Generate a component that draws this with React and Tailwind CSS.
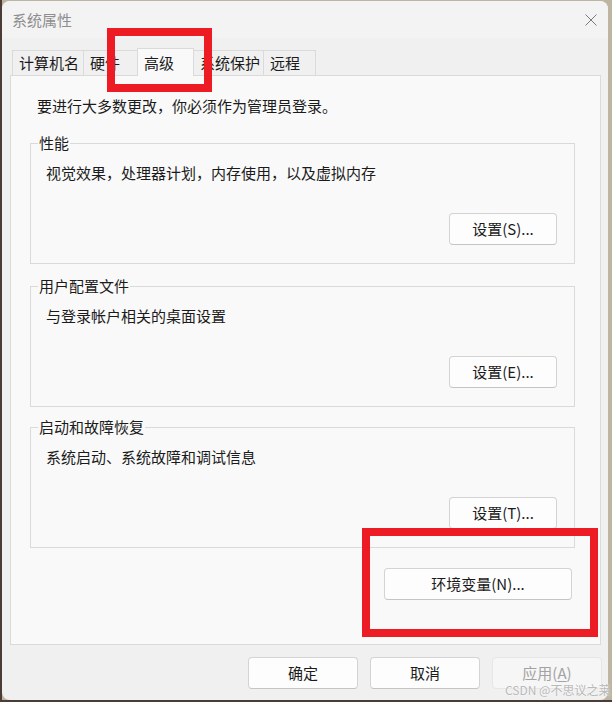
import React from "react";

function Btn({ children, className = "", disabled = false }) {
  return (
    <button
      type="button"
      className={
        "h-[32px] rounded-[4px] border text-[15px] leading-[20px] flex items-center justify-center " +
        (disabled
          ? "bg-[#f6f6f6] border-[#e6e6e6] text-[#a2a2a2] "
          : "bg-[#fdfdfd] border-[#d3d3d3] border-b-[#c4c4c4] text-[#1b1b1b] ") +
        className
      }
    >
      {children}
    </button>
  );
}

function Group({ title, text, btn }) {
  return (
    <fieldset className="ml-[19px] mr-[25px] border border-[#dadada]">
      <legend className="ml-[7px] px-[1px] text-[15px] leading-[20px] text-[#1b1b1b]">{title}</legend>
      <div className="flex flex-col pl-[15px] pr-[17px] pt-[10px] pb-[18px]">
        <div className="text-[15px] leading-[20px] text-[#1b1b1b]">{text}</div>
        <Btn className="self-end mt-[30px] w-[108px]">{btn}</Btn>
      </div>
    </fieldset>
  );
}

function Tab({ label, w, selected = false, first = false }) {
  return (
    <div
      className={
        (first ? "" : "-ml-px ") +
        (selected
          ? "h-[28px] -mb-px relative z-10 bg-[#f9f9f9] pt-[4px] "
          : "h-[25px] bg-[#f0f0f0] pt-[2px] ") +
        "border-t border-l border-r border-[#dadada] pl-[6px] text-[15px] leading-[20px] text-[#1b1b1b] " +
        w
      }
    >
      {label}
    </div>
  );
}

export default function App() {
  return (
    <div className="relative w-[612px] h-[702px] overflow-hidden bg-[#bdb5a2] border-l-[2px] border-b-[2px] border-[#4b3d36] pt-px font-['Microsoft_YaHei_UI','Noto_Sans_CJK_SC',sans-serif]">
      <div className="w-[606px] h-[699px] rounded-[8px] bg-[#f0f0f0] flex flex-col overflow-hidden">
        {/* title bar */}
        <div className="h-[37px] bg-[#f3f3f3] flex items-center justify-between pl-[10px] pr-[11px]">
          <span className="text-[15px] leading-[20px] text-[#8e8e8e]">系统属性</span>
          <svg width="12" height="12" viewBox="0 0 12 12" className="block">
            <path d="M0.5 0.5 L11.5 11.5 M11.5 0.5 L0.5 11.5" stroke="#7a7a7a" strokeWidth="1" fill="none" />
          </svg>
        </div>

        {/* tabs */}
        <div className="mt-[10px] ml-[10px] flex items-end">
          <Tab label="计算机名" w="w-[72px]" first />
          <Tab label="硬件" w="w-[55px]" />
          <Tab label="高级" w="w-[57px]" selected />
          <Tab label="系统保护" w="w-[71px]" />
          <Tab label="远程" w="w-[53px]" />
        </div>

        {/* panel */}
        <div className="ml-[8px] w-[591px] border border-[#dadada] bg-[#f9f9f9] pt-[20px] pb-[44px] flex flex-col">
          <div className="pl-[26px] text-[15px] leading-[20px] text-[#1b1b1b]">
            要进行大多数更改，你必须作为管理员登录。
          </div>
          <div className="mt-[17px]">
            <Group title="性能" text="视觉效果，处理器计划，内存使用，以及虚拟内存" btn="设置(S)..." />
          </div>
          <div className="mt-[12px]">
            <Group title="用户配置文件" text="与登录帐户相关的桌面设置" btn="设置(E)..." />
          </div>
          <div className="mt-[10px]">
            <Group title="启动和故障恢复" text="系统启动、系统故障和调试信息" btn="设置(T)..." />
          </div>
          <Btn className="self-end mt-[20px] mr-[28px] w-[188px]">环境变量(N)...</Btn>
        </div>

        {/* bottom buttons */}
        <div className="mt-[12px] flex justify-end gap-[12px] pr-[6px]">
          <Btn className="w-[110px]">确定</Btn>
          <Btn className="w-[110px]">取消</Btn>
          <Btn className="w-[110px]" disabled>
            <span>
              应用(<span className="underline underline-offset-2">A</span>)
            </span>
          </Btn>
        </div>
      </div>

      {/* annotation overlays */}
      <div className="absolute left-[105px] top-[28px] w-[105px] h-[64px] border-[8px] border-[#ed1c24]" />
      <div className="absolute left-[360px] top-[528px] w-[236px] h-[109px] border-[8px] border-[#ed1c24]" />
      <div className="absolute left-[503px] top-[682px] text-[12px] leading-[16px] text-[#b9b9b9] [text-shadow:0_0_2px_#ffffff]">
        CSDN @不思议之莱
      </div>
    </div>
  );
}
